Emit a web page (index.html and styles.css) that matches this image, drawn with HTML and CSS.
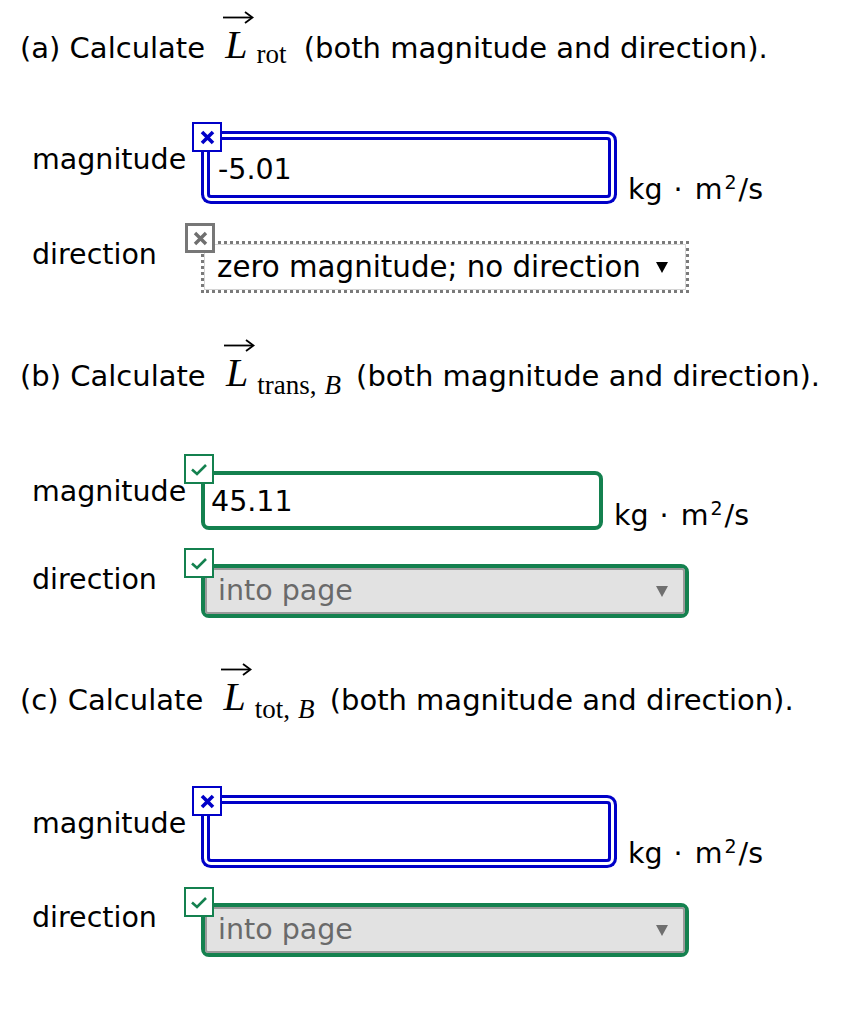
FILE: index.html
```html
<!DOCTYPE html>
<html lang="en">
<head>
<meta charset="utf-8">
<title>Angular momentum</title>
<link rel="stylesheet" href="styles.css">
</head>
<body>
<div class="page">

  <p class="title">(a) Calculate <span class="math m-a"><span class="vec">L<svg class="arrow" width="32" height="14" viewBox="0 0 32 14"><path d="M1 7.5 H30" /><path d="M23 2 L30.5 7.5 L23 13" /></svg></span><span class="sub s-a">rot</span></span> (both magnitude and direction).</p>

  <div class="row row-a1">
    <span class="label lab-mag">magnitude</span>
    <div class="field field-blue fb-a">
      <span class="badge badge-blue"><svg width="15" height="15" viewBox="0 0 15 15"><path d="M2 2 L13 13 M13 2 L2 13" /></svg></span>
      <span class="value">-5.01</span>
    </div>
    <span class="unit u-blue">kg<span class="dot">·</span>m<sup class="sq">2</sup>/s</span>
  </div>

  <div class="row row-a2">
    <span class="label lab-dir">direction</span>
    <div class="select select-dotted">
      <span class="badge badge-gray"><svg width="15" height="15" viewBox="0 0 15 15"><path d="M2 2 L13 13 M13 2 L2 13" /></svg></span>
      <div class="sel-inner sel-inner-dotted">
        <span class="sel-text">zero magnitude; no direction</span>
        <svg class="caret" width="12" height="11" viewBox="0 0 12 11"><path d="M0 0 H12 L6 11 Z" /></svg>
      </div>
    </div>
  </div>

  <p class="title title-b">(b) Calculate <span class="math m-b"><span class="vec">L<svg class="arrow" width="32" height="14" viewBox="0 0 32 14"><path d="M1 7.5 H30" /><path d="M23 2 L30.5 7.5 L23 13" /></svg></span><span class="sub s-b">trans,<i class="bi">B</i></span></span> (both magnitude and direction).</p>

  <div class="row row-b1">
    <span class="label lab-mag">magnitude</span>
    <div class="field field-green">
      <span class="badge badge-green"><svg width="18" height="13" viewBox="0 0 18 13"><path d="M2 6.5 L7 11 L16 2" /></svg></span>
      <span class="value">45.11</span>
    </div>
    <span class="unit u-green">kg<span class="dot">·</span>m<sup class="sq">2</sup>/s</span>
  </div>

  <div class="row row-b2">
    <span class="label lab-dir">direction</span>
    <div class="select select-green">
      <span class="badge badge-green badge-sel"><svg width="18" height="13" viewBox="0 0 18 13"><path d="M2 6.5 L7 11 L16 2" /></svg></span>
      <div class="sel-inner sel-inner-gray">
        <span class="sel-text">into page</span>
        <svg class="caret" width="12" height="11" viewBox="0 0 12 11"><path d="M0 0 H12 L6 11 Z" /></svg>
      </div>
    </div>
  </div>

  <p class="title title-c">(c) Calculate <span class="math m-c"><span class="vec">L<svg class="arrow" width="32" height="14" viewBox="0 0 32 14"><path d="M1 7.5 H30" /><path d="M23 2 L30.5 7.5 L23 13" /></svg></span><span class="sub s-b">tot,<i class="bi">B</i></span></span> (both magnitude and direction).</p>

  <div class="row row-c1">
    <span class="label lab-mag">magnitude</span>
    <div class="field field-blue fb-c">
      <span class="badge badge-blue"><svg width="15" height="15" viewBox="0 0 15 15"><path d="M2 2 L13 13 M13 2 L2 13" /></svg></span>
      <span class="value"></span>
    </div>
    <span class="unit u-blue">kg<span class="dot">·</span>m<sup class="sq">2</sup>/s</span>
  </div>

  <div class="row row-c2">
    <span class="label lab-dir lab-dir-c">direction</span>
    <div class="select select-green">
      <span class="badge badge-green badge-sel"><svg width="18" height="13" viewBox="0 0 18 13"><path d="M2 6.5 L7 11 L16 2" /></svg></span>
      <div class="sel-inner sel-inner-gray">
        <span class="sel-text">into page</span>
        <svg class="caret" width="12" height="11" viewBox="0 0 12 11"><path d="M0 0 H12 L6 11 Z" /></svg>
      </div>
    </div>
  </div>

</div>
</body>
</html>
```
FILE: styles.css
```css
html, body {
  margin: 0;
  padding: 0;
  background: #ffffff;
}

body {
  font-family: "DejaVu Sans", Verdana, sans-serif;
  font-size: 28.5px;
  line-height: 34px;
  color: #000;
}

.page {
  padding: 31px 0 40px 20px;
}

.title {
  margin: 0;
  font-size: 29px;
  white-space: nowrap;
}

.title-b { margin-top: 66px; }
.title-c { margin-top: 65px; }

/* math */
.math {
  font-family: "Liberation Serif", "Times New Roman", serif;
  line-height: 0;
  margin: 0 8px 0 8px;
}
.m-b { margin-right: 6px; }
.m-c { margin-right: 6px; }

.vec {
  position: relative;
  font-style: italic;
  font-size: 40px;
  padding: 0 7px 0 3px;
}

.arrow {
  position: absolute;
  left: 0;
  top: -12px;
  fill: none;
  stroke: #000;
  stroke-width: 1.8;
}

.sub {
  font-size: 27px;
  font-style: normal;
  margin-left: 2px;
}
.s-a { vertical-align: -5px; }
.s-b { vertical-align: -8px; }

.bi {
  font-style: italic;
  margin-left: 8px;
}

/* rows */
.row {
  display: flex;
  align-items: flex-start;
  margin-left: 12px;
}

.row-a1 { margin-top: 57px; }
.row-a2 { margin-top: 16px; }
.row-b1 { margin-top: 61px; }
.row-b2 { margin-top: 15px; }
.row-c1 { margin-top: 69px; }
.row-c2 { margin-top: 16px; }

.label {
  flex: none;
  width: 169px;
  white-space: nowrap;
}
.lab-mag { margin-top: 21px; }
.lab-dir { margin-top: 15px; }
.lab-dir-c { margin-top: 14px; }

/* text fields */
.field {
  position: relative;
  flex: none;
  box-sizing: border-box;
}

.field-blue {
  width: 404px;
  height: 61px;
  margin: 15px 6px 0 6px;
  border: 3px solid #0000c8;
  border-radius: 4px;
  box-shadow: 0 0 0 3px #ffffff, 0 0 0 6px #0000c8;
  padding: 13px 8px 0 8px;
}

.field-green {
  width: 402px;
  height: 59px;
  margin-top: 17px;
  border: 4px solid #14814f;
  border-radius: 8px;
  padding: 10px 6px 0 6px;
}

.value {
  display: block;
  height: 34px;
  white-space: nowrap;
}

.unit {
  flex: none;
  white-space: nowrap;
  margin-left: 11px;
}
.u-blue { margin-top: 51px; }
.u-green { margin-top: 45px; }

.dot {
  margin: 0 12px 0 11px;
}

.sq {
  font-size: 19px;
  line-height: 0;
  vertical-align: 10px;
  margin-left: 2px;
  margin-right: 2px;
}

/* badges */
.badge {
  position: absolute;
  z-index: 2;
  width: 30px;
  height: 30px;
  box-sizing: border-box;
  background: #ffffff;
  border: 2px solid;
  display: flex;
  align-items: center;
  justify-content: center;
}

.badge svg {
  fill: none;
  display: block;
}

.badge-blue {
  left: -18px;
  top: -18px;
  border-color: #0000c8;
}
.badge-blue svg {
  stroke: #0000c8;
  stroke-width: 3.6;
}

.badge-gray {
  left: -19px;
  top: -21px;
  border: 3px solid #777777;
}
.badge-gray svg {
  stroke: #6f6f6f;
  stroke-width: 3.4;
}

.badge-green {
  left: -21px;
  top: -21px;
  border-color: #14814f;
}
.badge-green svg {
  stroke: #14814f;
  stroke-width: 2.6;
}
.badge-sel {
  top: -20px;
}

/* selects */
.select {
  position: relative;
  flex: none;
  box-sizing: border-box;
  width: 488px;
}

.select-dotted {
  height: 52px;
  margin-top: 18px;
  border: 3px dotted #7a7a7a;
}

.select-green {
  height: 54px;
  margin-top: 16px;
  border: 4px solid #14814f;
  border-radius: 8px;
}

.sel-inner {
  display: flex;
  align-items: center;
  justify-content: space-between;
  height: 100%;
  box-sizing: border-box;
}

.sel-inner-dotted {
  border: 1px solid #d4d4d4;
  padding: 5px 17px 5px 12px;
  color: #000;
  font-size: 29.3px;
}
.sel-inner-dotted .caret { fill: #000; }

.sel-inner-gray {
  border: 2px solid #9a9a9a;
  border-radius: 3px;
  background: #e2e2e2;
  padding: 4px 15px 4px 11px;
  color: #6a6a6a;
}
.sel-inner-gray .caret { fill: #6f6f6f; }

.sel-text {
  white-space: nowrap;
  line-height: 34px;
}

.caret {
  flex: none;
  display: block;
}
```
